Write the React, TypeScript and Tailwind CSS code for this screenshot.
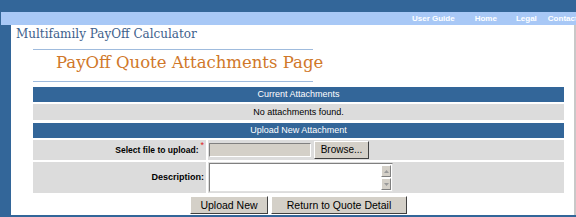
import React from 'react';

const ScrollArrow: React.FC<{ up?: boolean }> = ({ up }) => (
    <div className="flex-1 flex items-center justify-center bg-[#d4d0c8] border border-t-white border-l-white border-r-[#808080] border-b-[#808080]">
        <svg width="5" height="3" viewBox="0 0 5 3">
            <path d={up ? 'M0 3L2.5 0L5 3z' : 'M0 0L2.5 3L5 0z'} fill="#9a9a9a" />
        </svg>
    </div>
);

const btn =
    'h-[18px] bg-[#d4d0c8] border border-t-white border-l-white border-r-[#404040] border-b-[#404040] text-black flex items-center justify-center';

const App: React.FC = () => {
    return (
        <div className="w-[576px] h-[217px] overflow-hidden bg-[#336699] flex flex-col font-['Liberation_Sans',Arial,sans-serif]">
            <div className="h-[12px] shrink-0" />
            <nav className="h-[13px] shrink-0 ml-px bg-[#a8c8f6] flex items-center pl-[411px] text-[8px] font-bold text-white whitespace-nowrap overflow-hidden leading-none">
                <span>User Guide</span>
                <span className="ml-[20px]">Home</span>
                <span className="ml-[19px]">Legal</span>
                <span className="ml-[11px]">Contact</span>
            </nav>
            <div className="flex-1 flex min-h-0">
                <div className="w-[11px] shrink-0" />
                <main className="flex-1 bg-white border-r-2 border-r-[#c8c8c8] flex flex-col mb-[2px]">
                    <h1 className="pl-[5px] pt-[2px] h-[24px] text-[12px] leading-[14px] text-[#40618c] font-['DejaVu_Serif',serif] whitespace-nowrap">
                        Multifamily PayOff Calculator
                    </h1>
                    <div className="ml-[22px] w-[280px] border-t border-[#9fbbdd] h-[33px] flex items-center pb-[5px]">
                        <h2 className="pl-[23px] text-[16.5px] text-[#d0782a] font-['DejaVu_Serif',serif] whitespace-nowrap leading-none">
                            PayOff Quote Attachments Page
                        </h2>
                    </div>
                    <div className="ml-[22px] w-[280px] border-t border-[#9fbbdd]" />
                    <div className="ml-[22px] w-[531px] mt-[5px] text-[9px] leading-none flex flex-col gap-[2px]">
                        <div className="h-[15px] bg-[#336699] text-white flex items-center justify-center">Current Attachments</div>
                        <div className="h-[16px] bg-[#dcdcdc] text-black flex items-center justify-center">No attachments found.</div>
                        <div className="h-[15px] mt-px bg-[#336699] text-white flex items-center justify-center">Upload New Attachment</div>
                        <div className="flex gap-[2px] h-[20px]">
                            <div className="w-[173px] bg-[#dcdcdc] flex items-center justify-end pr-[2px] font-bold text-[8.5px]">
                                Select file to upload:<span className="text-[#e02020] text-[9px] font-normal self-start mt-[1px] ml-[2px]">*</span>
                            </div>
                            <div className="flex-1 bg-[#dcdcdc] flex items-center pl-px gap-[3px]">
                                <div className="w-[102px] h-[14px] bg-[#d4d0c8] border border-t-[#808080] border-l-[#808080] border-r-white border-b-white" />
                                <button className={`${btn} w-[55px] h-[16px] text-[10px]`}>Browse...</button>
                            </div>
                        </div>
                        <div className="flex gap-[2px] h-[31px]">
                            <div className="w-[173px] bg-[#dcdcdc] flex items-center justify-end pr-[2px] font-bold">Description:</div>
                            <div className="flex-1 bg-[#dcdcdc] flex items-center pl-px">
                                <div className="w-[184px] h-[29px] bg-white border border-t-[#808080] border-l-[#808080] border-r-[#e0e0e0] border-b-[#e0e0e0] flex justify-end">
                                    <div className="w-[10px] flex flex-col gap-px py-px mr-px">
                                        <ScrollArrow up />
                                        <ScrollArrow />
                                    </div>
                                </div>
                            </div>
                        </div>
                        <div className="h-[20px] flex items-center justify-center gap-[3px]">
                            <button className={`${btn} w-[78px] text-[10.5px]`}>Upload New</button>
                            <button className={`${btn} w-[136px] text-[10.5px]`}>Return to Quote Detail</button>
                        </div>
                    </div>
                </main>
            </div>
        </div>
    );
};

export default App;
